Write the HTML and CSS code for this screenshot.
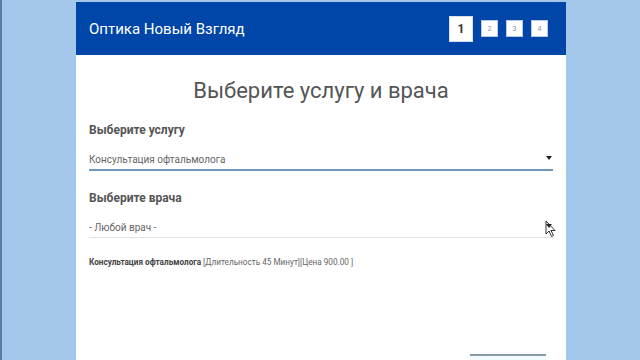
FILE: index.html
```html
<!DOCTYPE html>
<html>

<head>
  <meta charset="UTF-8">
  <meta name="viewport" content="width=device-width, initial-scale=1.0">
  <link rel="stylesheet" href="styles.css">
</head>

<body>
  <div class="container">
    <div class="header">
      <div class="brand">Оптика Новый Взгляд</div>
      <div class="steps">
        <span class="step active">1</span>
        <span class="step">2</span>
        <span class="step">3</span>
        <span class="step">4</span>
      </div>
    </div>

    <div class="content">
      <h1 class="title">Выберите услугу и врача</h1>

      <div class="field">
        <label for="usluga">Выберите услугу</label>
        <div class="custom-select focused">
          <select id="usluga">
            <option>Консультация офтальмолога</option>
          </select>
        </div>
      </div>

      <div class="field">
        <label for="vrach">Выберите врача</label>
        <div class="custom-select">
          <select id="vrach">
            <option>- Любой врач -</option>
          </select>
          <svg class="cursor" width="12" height="18" viewBox="0 0 12 18">
            <path d="M1 1 L1 14 L4 11 L6.5 16.5 L8.5 15.5 L6 10.5 L10 10.5 Z" fill="#fff" stroke="#333" stroke-width="1"/>
          </svg>
        </div>
      </div>

      <p class="info"><b>Консультация офтальмолога</b> [Длительность 45 Минут][Цена 900.00 ]</p>

      <div class="actions">
        <!-- кнопка "Далее" уходит за нижний край -->
        <button type="button" class="next" aria-label="Далее"></button>
      </div>
    </div>
  </div>
</body>

</html>
```

FILE: styles.css
```css
/* Общие стили */
html,
body {
  margin: 0;
  height: 100%;
  overflow: hidden;
}

body {
  background-color: #a4c7ec;
  border-left: 2px solid #5b7ea6;
  font-family: Roboto, "Noto Sans", sans-serif;
  box-sizing: border-box;
}

.container {
  width: 490px;
  margin: 2px auto 0;
  background-color: #fff;
  min-height: 400px;
}

/* Шапка */
.header {
  background-color: #0046a9;
  height: 53px;
  display: flex;
  align-items: center;
  justify-content: space-between;
  padding: 0 18px 0 13px;
}

.brand {
  color: #fff;
  font-size: 15px;
}

.steps {
  display: flex;
  align-items: center;
  gap: 8px;
}

.step {
  width: 15px;
  height: 15px;
  background-color: #fff;
  border: 1px solid #b9c9e4;
  color: #8a93a3;
  font-size: 7px;
  display: flex;
  align-items: center;
  justify-content: center;
}

.step.active {
  width: 22px;
  height: 24px;
  color: #333;
  font-size: 12px;
  font-weight: bold;
  border-color: #d6e0f0;
}

/* Форма */
.content {
  padding: 22px 13px 0;
}

.title {
  margin: 0 0 17px;
  text-align: center;
  font-size: 22px;
  font-weight: normal;
  color: #555;
  line-height: 28px;
}

.field {
  margin-bottom: 19px;
}

.field:last-of-type {
  margin-bottom: 0;
}

.field label {
  display: block;
  font-size: 12px;
  font-weight: bold;
  color: #555;
  line-height: 16px;
  margin-bottom: 10px;
}

.custom-select {
  position: relative;
}

.custom-select select {
  appearance: none;
  -webkit-appearance: none;
  width: 100%;
  border: none;
  border-bottom: 1px solid #e2e2e2;
  background: transparent;
  font-family: Roboto, sans-serif;
  font-size: 10px;
  color: #666;
  padding: 4px 0 4px;
  outline: none;
}

.custom-select.focused select {
  border-bottom: 2px solid #6f97bb;
  padding-bottom: 4px;
}

.custom-select::after {
  content: '';
  border: 3px solid transparent;
  border-top: 4px solid #222;
  position: absolute;
  right: 1px;
  top: 8px;
  pointer-events: none;
}

.cursor {
  position: absolute;
  right: -4px;
  top: 4px;
}

.info {
  margin: 17px 0 0;
  font-size: 8.2px;
  color: #666;
}

.info b {
  color: #444;
}

.actions {
  display: flex;
  justify-content: flex-end;
  padding: 87px 7px 0 0;
}

.next {
  width: 76px;
  height: 30px;
  background-color: #f2fbff;
  border: none;
  border-top: 2px solid #8a9ba8;
}
```
